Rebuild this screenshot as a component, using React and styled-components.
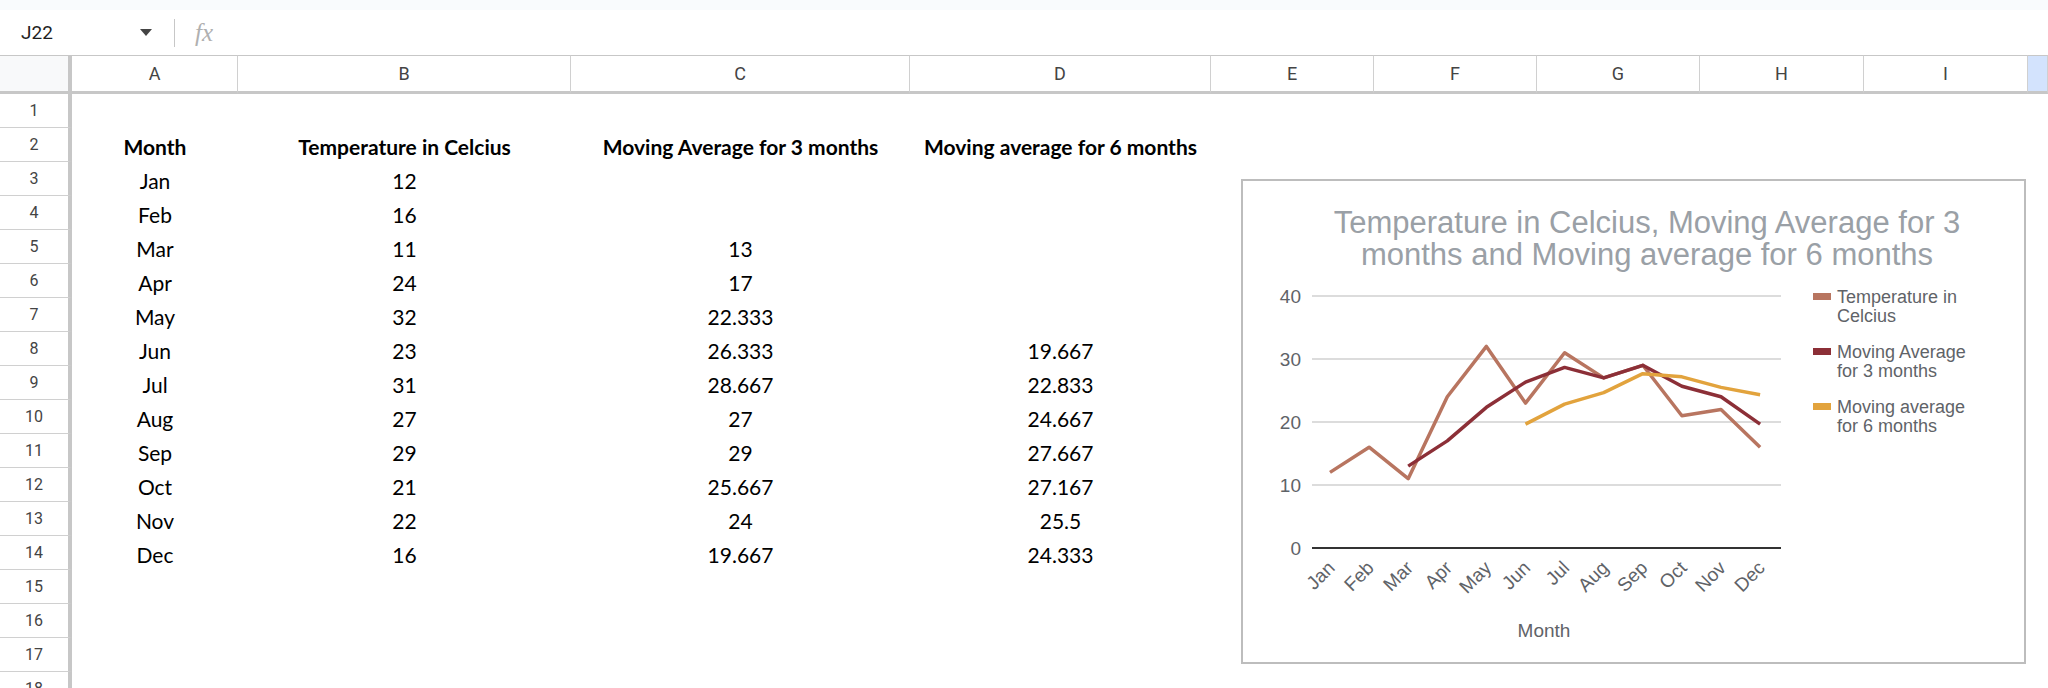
import React from "react";
import styled, { createGlobalStyle } from "styled-components";

const GlobalStyle = createGlobalStyle`
  html, body { margin: 0; padding: 0; background: #fff; }
  body { font-family: Roboto, "Liberation Sans", Arial, sans-serif; }
`;

const COLS = [
  { key: "", w: 72 },
  { key: "A", w: 166 },
  { key: "B", w: 333 },
  { key: "C", w: 339 },
  { key: "D", w: 301 },
  { key: "E", w: 163 },
  { key: "F", w: 163 },
  { key: "G", w: 163 },
  { key: "H", w: 164 },
  { key: "I", w: 164 },
];
const template = COLS.map((c) => `${c.w}px`).join(" ") + " 1fr";

const MONTHS = ["Jan", "Feb", "Mar", "Apr", "May", "Jun", "Jul", "Aug", "Sep", "Oct", "Nov", "Dec"];
const TEMP = [12, 16, 11, 24, 32, 23, 31, 27, 29, 21, 22, 16];
const MA3 = [null, null, 13, 17, 22.333, 26.333, 28.667, 27, 29, 25.667, 24, 19.667];
const MA6 = [null, null, null, null, null, 19.667, 22.833, 24.667, 27.667, 27.167, 25.5, 24.333];

const rows = [
  [],
  ["Month", "Temperature in Celcius", "Moving Average for 3 months", "Moving average for 6 months"],
  ...MONTHS.map((m, i) => [m, TEMP[i], MA3[i] ?? "", MA6[i] ?? ""]),
  [],
  [],
  [],
  [],
];

const Page = styled.div`
  position: relative;
  width: 2048px;
  height: 688px;
  overflow: hidden;
`;

const TopStrip = styled.div`
  height: 10px;
  background: #f9fbfd;
`;

const FormulaBar = styled.div`
  height: 45px;
  display: flex;
  align-items: center;
  font-size: 19px;
  color: #1f1f1f;
`;

const NameBox = styled.div`
  width: 122px;
  padding-left: 21px;
  box-sizing: border-box;
`;

const Caret = styled.span`
  width: 0;
  height: 0;
  border-left: 6px solid transparent;
  border-right: 6px solid transparent;
  border-top: 7px solid #444;
  margin: 0 22px 0 18px;
`;

const Sep = styled.span`
  width: 1px;
  height: 28px;
  background: #c7c7c7;
  margin-right: 20px;
`;

const Fx = styled.span`
  font-family: "Liberation Serif", serif;
  font-style: italic;
  font-size: 25px;
  color: #b0b0b0;
`;

const Grid = styled.div`
  display: grid;
  grid-template-columns: ${template};
  grid-auto-rows: 34px;
  grid-template-rows: 39px;
`;

const ColHead = styled.div`
  display: flex;
  align-items: center;
  justify-content: center;
  font-size: 18px;
  color: #444;
  border-top: 1px solid #c7c7c7;
  border-bottom: 3px solid #c7c7c7;
  border-right: 1px solid #d0d0d0;
  background: ${(p) => (p.$corner ? "#f8f9fa" : p.$sel ? "#d3e3fd" : "#fff")};
  ${(p) => p.$corner && "border-right: 4px solid #c7c7c7;"}
`;

const RowHead = styled.div`
  display: flex;
  align-items: center;
  justify-content: center;
  font-size: 16px;
  color: #444;
  border-right: 4px solid #c7c7c7;
  border-bottom: 1px solid #d0d0d0;
`;

const Cell = styled.div`
  display: flex;
  align-items: center;
  justify-content: center;
  font-family: Lato, "Open Sans", sans-serif;
  font-size: 21px;
  font-weight: ${(p) => (p.$bold ? 700 : 400)};
  color: #000;
  white-space: nowrap;
  padding-top: 2px;
`;

const ChartBox = styled.div`
  position: absolute;
  left: 1241px;
  top: 179px;
  width: 781px;
  height: 481px;
  border: 2px solid #bdbdbd;
  background: #fff;
`;

const X0 = 87;
const DX = 39.1;
const yOf = (v) => 367 - v * 6.3;
const xOf = (i) => X0 + i * DX;

const toPoints = (arr) =>
  arr
    .map((v, i) => (v == null ? null : `${xOf(i)},${yOf(v)}`))
    .filter(Boolean)
    .join(" ");

const SERIES = [
  { name: ["Temperature in", "Celcius"], data: TEMP, color: "#b87560" },
  { name: ["Moving Average", "for 3 months"], data: MA3, color: "#8c2f37" },
  { name: ["Moving average", "for 6 months"], data: MA6, color: "#e2a33d" },
];

function Chart() {
  return (
    <ChartBox>
      <svg width="781" height="481" fontFamily="'Liberation Sans', Arial, sans-serif">
        <text x="404" y="52" textAnchor="middle" fontSize="31" fill="#9aa0a6">
          Temperature in Celcius, Moving Average for 3
        </text>
        <text x="404" y="84" textAnchor="middle" fontSize="31" fill="#9aa0a6">
          months and Moving average for 6 months
        </text>
        {[40, 30, 20, 10, 0].map((v) => (
          <g key={v}>
            <line x1="69" x2="538" y1={yOf(v)} y2={yOf(v)} stroke={v === 0 ? "#333" : "#d0d0d0"} strokeWidth={v === 0 ? 2 : 1.3} />
            <text x="58" y={yOf(v) + 7} textAnchor="end" fontSize="19" fill="#5f6368">{v}</text>
          </g>
        ))}
        {SERIES.map((s) => (
          <polyline key={s.color} points={toPoints(s.data)} fill="none" stroke={s.color} strokeWidth="3.5" strokeLinejoin="round" />
        ))}
        {MONTHS.map((m, i) => (
          <text key={m} x={xOf(i) + 6} y="388" textAnchor="end" fontSize="19" fill="#5f6368" transform={`rotate(-45 ${xOf(i) + 6} 388)`}>
            {m}
          </text>
        ))}
        <text x="301" y="456" textAnchor="middle" fontSize="19" fill="#5f6368">Month</text>
        {SERIES.map((s, i) => (
          <g key={s.color}>
            <rect x="570" y={112 + i * 55} width="18" height="7" fill={s.color} />
            <text x="594" y={122 + i * 55} fontSize="18" fill="#5f6368">{s.name[0]}</text>
            <text x="594" y={141 + i * 55} fontSize="18" fill="#5f6368">{s.name[1]}</text>
          </g>
        ))}
      </svg>
    </ChartBox>
  );
}

export default function App() {
  return (
    <Page>
      <GlobalStyle />
      <TopStrip />
      <FormulaBar>
        <NameBox>J22</NameBox>
        <Caret />
        <Sep />
        <Fx>fx</Fx>
      </FormulaBar>
      <Grid>
        {COLS.map((c, i) => (
          <ColHead key={i} $corner={i === 0}>{c.key}</ColHead>
        ))}
        <ColHead $sel />
        {rows.map((r, ri) => (
          <React.Fragment key={ri}>
            <RowHead>{ri + 1}</RowHead>
            {[0, 1, 2, 3].map((ci) => (
              <Cell key={ci} $bold={ri === 1}>{r[ci] ?? ""}</Cell>
            ))}
            {[4, 5, 6, 7, 8, 9].map((ci) => (
              <Cell key={ci} />
            ))}
          </React.Fragment>
        ))}
      </Grid>
      <Chart />
    </Page>
  );
}
